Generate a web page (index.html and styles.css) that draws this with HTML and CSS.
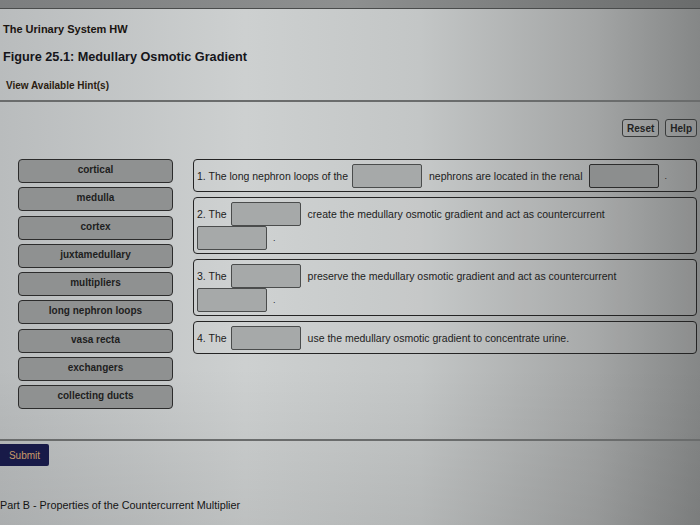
FILE: index.html
```html
<!DOCTYPE html>
<html>
  <head>
    <title>The Urinary System HW</title>
    <meta name="viewport" content="width=device-width, initial-scale=1.0" />
    <link rel="stylesheet" href="styles.css">
  </head>
  <body>
    <div class="topbar"></div>

    <header class="page-head">
      <p class="course">The Urinary System HW</p>
      <h1>Figure 25.1: Medullary Osmotic Gradient</h1>
      <p class="hints">View Available Hint(s)</p>
    </header>

    <div class="tools">
      <button class="tool-btn">Reset</button>
      <button class="tool-btn">Help</button>
    </div>

    <div class="exercise">
      <ul class="word-bank">
        <li>cortical</li>
        <li>medulla</li>
        <li>cortex</li>
        <li>juxtamedullary</li>
        <li>multipliers</li>
        <li>long nephron loops</li>
        <li>vasa recta</li>
        <li>exchangers</li>
        <li>collecting ducts</li>
      </ul>

      <div class="sentences">
        <div class="sentence">
          <span class="txt">1. The long nephron loops of the</span>
          <span class="blank"></span>
          <span class="txt">nephrons are located in the renal</span>
          <span class="blank dark"></span>
          <span class="dot">.</span>
        </div>
        <div class="sentence">
          <span class="txt">2. The</span>
          <span class="blank"></span>
          <span class="txt">create the medullary osmotic gradient and act as countercurrent</span>
          <span class="wrap"></span>
          <span class="blank"></span>
          <span class="dot">.</span>
        </div>
        <div class="sentence">
          <span class="txt">3. The</span>
          <span class="blank"></span>
          <span class="txt">preserve the medullary osmotic gradient and act as countercurrent</span>
          <span class="wrap"></span>
          <span class="blank"></span>
          <span class="dot">.</span>
        </div>
        <div class="sentence">
          <span class="txt">4. The</span>
          <span class="blank"></span>
          <span class="txt">use the medullary osmotic gradient to concentrate urine.</span>
        </div>
      </div>
    </div>

    <div class="submit-row">
      <button class="submit">Submit</button>
    </div>

    <p class="part">Part B - Properties of the Countercurrent Multiplier</p>
  </body>
</html>
```

FILE: styles.css
```css
* {
  box-sizing: border-box;
}

body {
  margin: 0;
  width: 700px;
  height: 525px;
  overflow: hidden;
  font-family: "Liberation Sans", Arial, sans-serif;
  color: #1c1c1c;
  background:
    linear-gradient(180deg, rgba(0, 0, 0, 0) 0%, rgba(0, 0, 0, 0) 70%, rgba(0, 0, 0, 0.08) 100%),
    linear-gradient(90deg, #b9bcbd 0%, #cdd0d0 35%, #c3c6c6 60%, #a3a5a5 85%, #858787 100%);
}

.topbar {
  height: 9px;
  background: linear-gradient(90deg, #7c7e7f, #8e9090 50%, #6a6c6c);
  border-bottom: 1px solid #4a4c4c;
}

/* header block ends with the grey rule under the hints link */
.page-head {
  height: 93px;
  padding: 14px 0 0 3px;
  border-bottom: 2px solid #6a6c6c;
}

.course {
  margin: 0;
  font-size: 11px;
  line-height: 13px;
  font-weight: bold;
  color: #1a1410;
}

.page-head h1 {
  margin: 14px 0 0 0;
  font-size: 12.7px;
  line-height: 15px;
  font-weight: bold;
  color: #15151a;
}

.hints {
  margin: 15px 0 0 3px;
  font-size: 10px;
  line-height: 12px;
  font-weight: bold;
  color: #2a1c10;
}

.tools {
  display: flex;
  justify-content: flex-end;
  gap: 6px;
  padding: 17px 3px 0 0;
}

.tool-btn {
  font-family: inherit;
  font-size: 10px;
  font-weight: bold;
  color: #222;
  background: rgba(255, 255, 255, 0.06);
  border: 1.5px solid #3a3c3c;
  border-radius: 3px;
  padding: 1px 4px;
  height: 18px;
}

.exercise {
  display: flex;
  gap: 20px;
  height: 304px;
  padding: 22px 3px 0 18px;
  border-bottom: 2px solid #6a6c6c;
}

.word-bank {
  list-style: none;
  margin: 0;
  padding: 0;
  width: 155px;
  display: flex;
  flex-direction: column;
  gap: 4.3px;
}

.word-bank li {
  height: 24px;
  padding-top: 4px;
  text-align: center;
  font-size: 10px;
  font-weight: bold;
  color: #1e1e1e;
  background: #8f9191;
  border: 1.5px solid #2c2c2c;
  border-radius: 4px;
}

.sentences {
  flex: 1;
  display: flex;
  flex-direction: column;
  gap: 5px;
}

.sentence {
  display: flex;
  flex-wrap: wrap;
  align-items: center;
  padding: 4px 4px 3px 3px;
  border: 1.5px solid #242424;
  border-radius: 4px;
  background: rgba(255, 255, 255, 0.05);
  font-size: 10.5px;
}

.txt {
  margin-right: 4px;
}

.blank + .txt {
  margin-left: 7px;
}

.wrap {
  flex-basis: 100%;
  height: 0;
}

.blank {
  width: 70px;
  height: 24px;
  background: #a6a9a9;
  border: 1px solid #4a4c4c;
  border-radius: 2px;
}

.blank.dark {
  margin-left: 2px;
  background: #8c8e8e;
  border-color: #2c2c2c;
}

.dot {
  margin-left: 6px;
  font-size: 9px;
}

.submit-row {
  padding: 3px 0 0 0;
}

.submit {
  font-family: inherit;
  font-size: 10px;
  color: #c99a68;
  background: #181a48;
  border: none;
  border-radius: 0 2px 2px 0;
  width: 49px;
  height: 22px;
  padding: 0;
}

.part {
  margin: 33px 0 0 0;
  font-size: 10.8px;
  line-height: 12px;
  color: #141414;
}
```
